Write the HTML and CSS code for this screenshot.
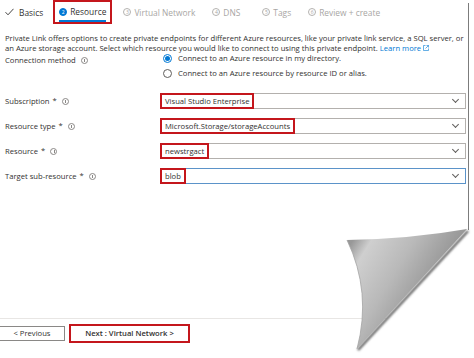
FILE: index.html
```html
<!DOCTYPE html>
<html lang="en">
<head>
    <meta charset="UTF-8">
    <meta name="viewport" content="width=device-width, initial-scale=1.0">
    <title>Create a private endpoint - Resource</title>
    <link rel="stylesheet" href="styles.css">
</head>
<body>
    <div class="sheet">
        <nav class="tabs">
            <div class="tab done">
                <svg class="check" width="9" height="8" viewBox="0 0 9 8"><polyline points="0.5,4.2 3,6.8 8.5,0.8" fill="none" stroke="#323130" stroke-width="0.9"/></svg>
                Basics
            </div>
            <div class="tab active">
                <div class="tab-inner"><span class="step">2</span>Resource</div>
            </div>
            <div class="tab"><span class="step">3</span>Virtual Network</div>
            <div class="tab wide"><span class="step">4</span>DNS</div>
            <div class="tab"><span class="step">5</span>Tags</div>
            <div class="tab"><span class="step">6</span>Review + create</div>
        </nav>

        <p class="intro">
            Private Link offers options to create private endpoints for different Azure resources, like your private link service, a SQL server, or<br>
            an Azure storage account. Select which resource you would like to connect to using this private endpoint.
            <a href="#" class="link">Learn more <svg width="6" height="6" viewBox="0 0 6 6"><path d="M2.5 0.5H0.5V5.5H5.5V3.5M3.5 0.5H5.5V2.5M5.5 0.5L2.5 3.5" fill="none" stroke="#0078d4" stroke-width="0.6"/></svg></a>
        </p>

        <div class="row connect">
            <div class="label">Connection method <span class="info"></span></div>
            <div class="options">
                <div class="option"><span class="radio on"></span>Connect to an Azure resource in my directory.</div>
                <div class="option"><span class="radio"></span>Connect to an Azure resource by resource ID or alias.</div>
            </div>
        </div>

        <div class="row">
            <div class="label">Subscription <span class="req">*</span> <span class="info"></span></div>
            <div class="select"><span class="value mark">Visual Studio Enterprise</span><span class="chevron"></span></div>
        </div>
        <div class="row">
            <div class="label">Resource type <span class="req">*</span> <span class="info"></span></div>
            <div class="select"><span class="value mark">Microsoft.Storage/storageAccounts</span><span class="chevron"></span></div>
        </div>
        <div class="row">
            <div class="label">Resource <span class="req">*</span> <span class="info"></span></div>
            <div class="select"><span class="value mark">newstrgact</span><span class="chevron"></span></div>
        </div>
        <div class="row">
            <div class="label">Target sub-resource <span class="req">*</span> <span class="info"></span></div>
            <div class="select focus"><span class="value mark">blob</span><span class="chevron"></span></div>
        </div>

        <footer class="actions">
            <button class="btn">&lt; Previous</button>
            <button class="btn next">Next : Virtual Network &gt;</button>
        </footer>

        <svg class="curl" width="474" height="358" viewBox="0 0 474 358">
            <defs>
                <linearGradient id="fold" x1="350" y1="245" x2="440" y2="300" gradientUnits="userSpaceOnUse">
                    <stop offset="0" stop-color="#989898"/>
                    <stop offset="0.15" stop-color="#cfcfcf"/>
                    <stop offset="0.5" stop-color="#b9b9b9"/>
                    <stop offset="1" stop-color="#8a8a8a"/>
                </linearGradient>
                <filter id="soft" x="-20%" y="-20%" width="140%" height="140%"><feGaussianBlur stdDeviation="1"/></filter>
            </defs>
            <!-- the part of the corner that is folded away -->
            <path d="M467 229 L474 229 L474 358 L0 358 L0 351 L357 351 Z" fill="#fff"/>
            <!-- right edge of the page -->
            <path d="M469 3 L469 231" stroke="#9a9a9a" stroke-width="2.5" filter="url(#soft)"/>
            <path d="M468.5 3 L468.5 230" stroke="#7c7c7c" stroke-width="1"/>
            <!-- bottom edge shadow -->
            <path d="M5 350.5 L358 350.5" stroke="#5a5a5a" stroke-width="2" filter="url(#soft)"/>
            <!-- shadow cast by the fold -->
            <path d="M468 231 L358 350" stroke="#5e5e5e" stroke-width="2.5" filter="url(#soft)"/>
            <!-- the fold -->
            <path d="M467 229 Q410 239 347 240 Q372 292 357 349 Z" fill="url(#fold)"/>
            <path d="M347 240 Q372 292 357 349" fill="none" stroke="#a3a3a3" stroke-width="0.8"/>
        </svg>
    </div>
</body>
</html>
```

FILE: styles.css
```css
* {
    margin: 0;
    padding: 0;
    box-sizing: border-box;
}
body {
    width: 474px;
    height: 358px;
    overflow: hidden;
    background-color: #fff;
    color: #323130;
    font-family: 'Segoe UI', 'Open Sans', 'Liberation Sans', sans-serif;
    font-size: 7.65px;
}
.sheet {
    position: relative;
    height: 350px;
    display: flex;
    flex-direction: column;
}
.tabs {
    display: flex;
    align-items: center;
    height: 24px;
    padding-left: 5px;
}
.tab {
    display: flex;
    align-items: center;
    gap: 3px;
    height: 24px;
    margin-right: 17px;
    color: #a8a6a4;
    font-size: 8.4px;
}
.tab.wide {
    margin-right: 22px;
}
.tab.done {
    color: #323130;
    gap: 5px;
    margin-right: 10px;
}
.tab.active {
    border: 2px solid #c4161c;
    padding: 0 4px 0 4px;
    color: #323130;
    margin-right: 11px;
}
.tab-inner {
    display: flex;
    align-items: center;
    gap: 3px;
    height: 20px;
    padding-top: 1px;
    border-bottom: 2px solid #0078d4;
}
.step {
    display: inline-flex;
    align-items: center;
    justify-content: center;
    width: 8px;
    height: 8px;
    border: 0.7px solid #b4b2b0;
    border-radius: 50%;
    font-size: 5px;
}
.active .step {
    background-color: #0078d4;
    border-color: #0078d4;
    color: #fff;
}
.intro {
    margin-top: 9px;
    padding-left: 5px;
    line-height: 10px;
    white-space: nowrap;
}
.link {
    color: #0078d4;
    text-decoration: none;
}
.row {
    display: grid;
    grid-template-columns: 155px 1fr;
    align-items: center;
    padding-left: 5px;
    padding-right: 8px;
    margin-bottom: 9px;
}
.connect {
    align-items: start;
    margin-bottom: 15px;
}
.connect .label {
    padding-top: 2px;
}
.label {
    display: flex;
    align-items: center;
    gap: 3px;
    line-height: 10px;
}
.req {
    color: #323130;
}
.info {
    display: inline-block;
    width: 7px;
    height: 7px;
    margin-left: 2px;
    border: 0.7px solid #8a8886;
    border-radius: 50%;
    position: relative;
}
.info::after {
    content: '';
    position: absolute;
    left: 2.3px;
    top: 1.6px;
    width: 0.8px;
    height: 2.6px;
    background-color: #8a8886;
}
.options {
    display: flex;
    flex-direction: column;
    gap: 5px;
    padding-left: 3px;
}
.option {
    display: flex;
    align-items: center;
    gap: 6px;
    line-height: 10px;
}
.radio {
    width: 9px;
    height: 9px;
    border: 0.8px solid #605e5c;
    border-radius: 50%;
    display: inline-flex;
    align-items: center;
    justify-content: center;
}
.radio.on {
    border-color: #0078d4;
}
.radio.on::after {
    content: '';
    width: 5px;
    height: 5px;
    border-radius: 50%;
    background-color: #0078d4;
}
.select {
    display: flex;
    align-items: stretch;
    height: 16px;
    border: 1px solid #b3b0ad;
}
.select.focus {
    border-color: #5b93c9;
}
.value {
    display: flex;
    align-items: center;
    padding: 0 3px;
}
.mark {
    margin: -1px 0 -1px -1px;
    border: 2px solid #c4161c;
}
.chevron {
    margin-left: auto;
    width: 5px;
    height: 5px;
    margin-right: 7px;
    margin-top: 3px;
    border-right: 0.8px solid #605e5c;
    border-bottom: 0.8px solid #605e5c;
    transform: rotate(45deg);
}
.actions {
    margin-top: auto;
    display: flex;
    align-items: center;
    gap: 4px;
    height: 32px;
    padding-bottom: 3px;
    border-top: 1px solid #e8e6e4;
}
.btn {
    font-family: inherit;
    font-size: 7.65px;
    color: #323130;
    background-color: #fff;
    height: 15px;
    padding: 0 9px;
    border: 1px solid #8a8886;
    margin-left: -1px;
    width: 66px;
}
.btn.next {
    width: 121px;
    height: 19px;
    margin-left: 0;
    border: 2px solid #c4161c;
    font-weight: 600;
}
.curl {
    position: absolute;
    top: 0;
    left: 0;
    pointer-events: none;
}
```
